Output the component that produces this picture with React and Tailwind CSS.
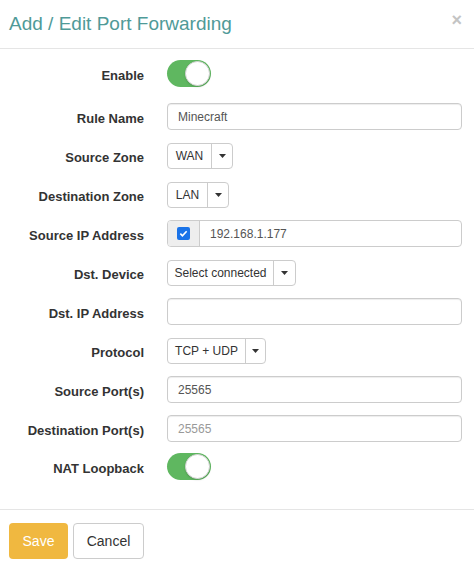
// Add / Edit Port Forwarding - modal form
const font = { fontFamily: '"Liberation Sans", Arial, sans-serif' };

const Label = ({ children }) => (
  <div className="w-[144px] shrink-0 pt-[4px] text-right text-[13px] font-bold text-[#333]">{children}</div>
);

const Row = ({ label, className = '', children }) => (
  <div className={`flex items-center h-[27px] ${className}`}>
    <Label>{label}</Label>
    <div className="ml-[23px] flex-1 flex items-center h-full pr-[12px]">{children}</div>
  </div>
);

const Toggle = () => (
  <div className="relative w-[44px] h-[27px] rounded-full bg-[#5fb760]">
    <div className="absolute right-[1px] top-[1px] w-[25px] h-[25px] rounded-full bg-white border border-[#d4d4d4] shadow-[0_1px_2px_rgba(0,0,0,0.15)]" />
  </div>
);

const TextInput = ({ value, muted = false }) => (
  <div className="flex-1 h-[27px] flex items-center px-[10px] border border-[#ccc] rounded-[4px] shadow-[inset_0_1px_1px_rgba(0,0,0,0.075)] bg-white">
    <span className={`text-[12px] ${muted ? 'text-[#999]' : 'text-[#555]'}`}>{value}</span>
  </div>
);

const Caret = () => (
  <svg width="7" height="4" viewBox="0 0 7 4">
    <path d="M0 0h7L3.5 4z" fill="#333" />
  </svg>
);

const Dropdown = ({ value, w, cw = 20 }) => (
  <div className="flex h-[26px] border border-[#ccc] rounded-[4px] bg-white">
    <div className="flex items-center justify-center border-r border-[#ccc] text-[12px] text-[#333]" style={{ width: w }}>
      {value}
    </div>
    <div className="flex items-center justify-center" style={{ width: cw }}>
      <Caret />
    </div>
  </div>
);

export default function App() {
  return (
    <div className="w-[474px] h-[568px] bg-white overflow-hidden" style={font}>
      {/* Header */}
      <div className="relative h-[49px] border-b border-[#e5e5e5] px-[9px] flex items-center">
        <h4 className="text-[19px] text-[#4f9a98] leading-none -mt-[2px]">Add / Edit Port Forwarding</h4>
        <span className="absolute right-[12px] top-[7px] text-[18px] font-bold text-[#c4c4c4]">×</span>
      </div>

      {/* Body */}
      <div className="flex flex-col">
        <Row label="Enable" className="mt-[11px]">
          <Toggle />
        </Row>
        <Row label="Rule Name" className="mt-[16px]">
          <TextInput value="Minecraft" />
        </Row>
        <Row label="Source Zone" className="mt-[12px]">
          <Dropdown value="WAN" w={44} />
        </Row>
        <Row label="Destination Zone" className="mt-[12px]">
          <Dropdown value="LAN" w={40} />
        </Row>
        <Row label="Source IP Address" className="mt-[12px]">
          <div className="flex-1 flex h-[27px] border border-[#ccc] rounded-[4px] overflow-hidden">
            <div className="w-[32px] bg-[#eee] border-r border-[#ccc] flex items-center justify-center">
              <div className="w-[13px] h-[13px] rounded-[2px] bg-[#1a73e8] flex items-center justify-center">
                <svg width="9" height="9" viewBox="0 0 10 10">
                  <path d="M1.5 5.2l2.3 2.3L8.5 2.5" stroke="white" strokeWidth="1.8" fill="none" />
                </svg>
              </div>
            </div>
            <div className="flex-1 flex items-center px-[10px] text-[12px] text-[#555]">192.168.1.177</div>
          </div>
        </Row>
        <Row label="Dst. Device" className="mt-[12px]">
          <Dropdown value="Select connected" w={106} cw={21} />
        </Row>
        <Row label="Dst. IP Address" className="mt-[12px]">
          <TextInput value="" />
        </Row>
        <Row label="Protocol" className="mt-[12px]">
          <Dropdown value="TCP + UDP" w={78} cw={19} />
        </Row>
        <Row label="Source Port(s)" className="mt-[12px]">
          <TextInput value="25565" />
        </Row>
        <Row label="Destination Port(s)" className="mt-[12px]">
          <TextInput value="25565" muted />
        </Row>
        <Row label="NAT Loopback" className="mt-[11px]">
          <Toggle />
        </Row>
      </div>

      {/* Footer */}
      <div className="mt-[29px] border-t border-[#e5e5e5] pt-[13px] px-[9px] flex gap-[5px]">
        <button className="w-[59px] h-[36px] rounded-[4px] bg-[#f0b840] text-white text-[14px]">Save</button>
        <button className="w-[71px] h-[36px] rounded-[4px] bg-white border border-[#ccc] text-[#333] text-[14px]">Cancel</button>
      </div>
    </div>
  );
}
